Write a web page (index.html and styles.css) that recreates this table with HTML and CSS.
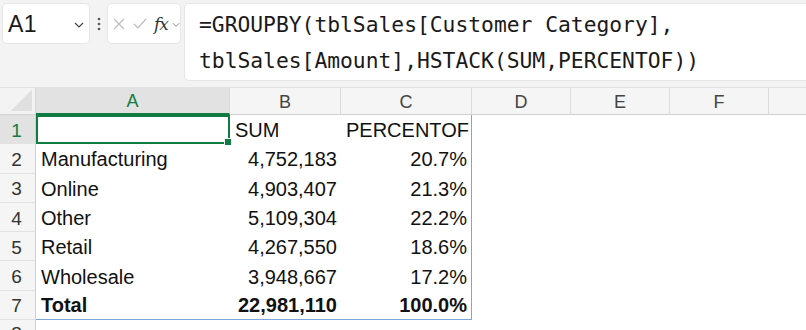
FILE: index.html
```html
<!DOCTYPE html>
<html>
<head>
<meta charset="utf-8">
<link rel="stylesheet" href="styles.css">
</head>
<body>
<div class="app">
  <div class="fbar">
    <div class="namebox">
      <span class="ref">A1</span>
      <svg class="chev" width="10" height="6" viewBox="0 0 10 6"><path d="M1 1 L5 5 L9 1" fill="none" stroke="#444" stroke-width="1.2"/></svg>
    </div>
    <div class="dots">
      <svg width="4" height="14" viewBox="0 0 4 14"><circle cx="2" cy="2" r="1.3" fill="#555"/><circle cx="2" cy="7" r="1.3" fill="#555"/><circle cx="2" cy="12" r="1.3" fill="#555"/></svg>
    </div>
    <div class="fnbox">
      <svg class="ico" width="12" height="12" viewBox="0 0 12 12"><path d="M1 1 L11 11 M11 1 L1 11" stroke="#bdbdbd" stroke-width="1.2"/></svg>
      <svg class="ico chk" width="14" height="11" viewBox="0 0 14 11"><path d="M1 6 L5 10 L13 1" fill="none" stroke="#bdbdbd" stroke-width="1.2"/></svg>
      <span class="fx">fx</span>
      <svg class="chev2" width="9" height="6" viewBox="0 0 9 6"><path d="M1 1 L4.5 4.5 L8 1" fill="none" stroke="#888" stroke-width="1.1"/></svg>
    </div>
    <div class="formula">
      <div class="fline">=GROUPBY(tblSales[Customer Category],</div>
      <div class="fline">tblSales[Amount],HSTACK(SUM,PERCENTOF))</div>
    </div>
  </div>
  <div class="sheet">
    <div class="corner"></div>
    <div class="ch sel">A</div>
    <div class="ch">B</div>
    <div class="ch">C</div>
    <div class="ch">D</div>
    <div class="ch">E</div>
    <div class="ch">F</div>
    <div class="ch last"></div>

    <div class="rh sel">1</div>
    <div class="c a1"></div>
    <div class="c">SUM</div>
    <div class="c spr pad">PERCENTOF</div>
    <div class="c"></div><div class="c"></div><div class="c"></div><div class="c"></div>

    <div class="rh">2</div>
    <div class="c">Manufacturing</div>
    <div class="c num">4,752,183</div>
    <div class="c num spr">20.7%</div>
    <div class="c"></div><div class="c"></div><div class="c"></div><div class="c"></div>

    <div class="rh">3</div>
    <div class="c">Online</div>
    <div class="c num">4,903,407</div>
    <div class="c num spr">21.3%</div>
    <div class="c"></div><div class="c"></div><div class="c"></div><div class="c"></div>

    <div class="rh">4</div>
    <div class="c">Other</div>
    <div class="c num">5,109,304</div>
    <div class="c num spr">22.2%</div>
    <div class="c"></div><div class="c"></div><div class="c"></div><div class="c"></div>

    <div class="rh">5</div>
    <div class="c">Retail</div>
    <div class="c num">4,267,550</div>
    <div class="c num spr">18.6%</div>
    <div class="c"></div><div class="c"></div><div class="c"></div><div class="c"></div>

    <div class="rh">6</div>
    <div class="c">Wholesale</div>
    <div class="c num">3,948,667</div>
    <div class="c num spr">17.2%</div>
    <div class="c"></div><div class="c"></div><div class="c"></div><div class="c"></div>

    <div class="rh">7</div>
    <div class="c b spb">Total</div>
    <div class="c b num spb">22,981,110</div>
    <div class="c b num spr spb">100.0%</div>
    <div class="c"></div><div class="c"></div><div class="c"></div><div class="c"></div>

    <div class="rh">8</div>
    <div class="c"></div><div class="c"></div><div class="c"></div>
    <div class="c"></div><div class="c"></div><div class="c"></div><div class="c"></div>
  </div>
</div>
</body>
</html>
```
FILE: styles.css
```css
* { box-sizing: border-box; }
html, body { margin: 0; padding: 0; }
body {
  width: 806px;
  height: 330px;
  overflow: hidden;
  background: #f3f3f3;
  font-family: "Liberation Sans", Arial, sans-serif;
}
.app { display: flex; flex-direction: column; height: 330px; }

.fbar {
  height: 87px;
  display: flex;
  align-items: flex-start;
  padding: 4px 0 0 3px;
  flex: none;
}
.namebox {
  width: 86px;
  height: 39px;
  background: #fff;
  border-radius: 4px;
  box-shadow: 0 0 0 1px #e6e6e6;
  display: flex;
  align-items: center;
  justify-content: space-between;
  padding: 1px 5px 0 5px;
}
.ref { font-size: 23px; color: #1a1a1a; letter-spacing: 0.3px; }
.chev { margin-top: 1px; }
.dots {
  width: 19px;
  height: 39px;
  display: flex;
  align-items: center;
  justify-content: center;
}
.fnbox {
  width: 72px;
  height: 39px;
  background: #fff;
  border-radius: 4px;
  box-shadow: 0 0 0 1px #e6e6e6;
  display: flex;
  align-items: center;
  padding: 0 0 0 5px;
}
.ico { flex: none; }
.chk { margin-left: 8px; }
.fx {
  font-family: "DejaVu Serif", "Liberation Serif", serif;
  font-style: italic;
  font-size: 17px;
  color: #333;
  margin-left: 7px;
  letter-spacing: -1px;
}
.chev2 { margin-left: 4px; margin-top: 2px; }
.formula {
  flex: 1;
  margin-left: 5px;
  margin-right: -10px;
  height: 76px;
  background: #fff;
  border-radius: 4px;
  box-shadow: 0 0 0 1px #e6e6e6;
  padding: 0 0 0 14px;
  font-family: "DejaVu Sans Mono", "Liberation Mono", monospace;
  font-size: 21.3px;
  color: #1a1a1a;
}
.fline { height: 36px; line-height: 36px; }
.fline:first-child { margin-top: 3px; }

.sheet {
  flex: 1;
  display: grid;
  grid-template-columns: 36px 194px 111px 131px 99px 99px 99px 1fr;
  grid-template-rows: 28px repeat(7, 29.3px) 1fr;
  background: #fff;
  overflow: hidden;
}
.corner {
  background: linear-gradient(135deg, #f3f3f3 0%, #f3f3f3 55%, #e0e0e0 55%, #e0e0e0 100%);
  border-right: 1px solid #d4d4d4;
  border-bottom: 1px solid #d4d4d4;
  border-top: 1px solid #e2e2e2;
  box-shadow: inset -3px -3px 0 #f3f3f3;
}
.ch {
  background: #f5f5f5;
  border-right: 1px solid #dadada;
  border-bottom: 1px solid #d0d0d0;
  border-top: 1px solid #e2e2e2;
  display: flex;
  align-items: center;
  justify-content: center;
  font-size: 18px;
  color: #444;
  padding-top: 2px;
}
.ch.sel {
  background: #e2e2e2;
  color: #107c41;
  border-bottom: 2px solid #107c41;
}
.ch.last { border-right: none; }
.rh {
  background: #f5f5f5;
  border-right: 1px solid #d0d0d0;
  border-bottom: 1px solid #e2e2e2;
  display: flex;
  align-items: center;
  justify-content: center;
  font-size: 19px;
  color: #333;
  padding: 3px 2px 0 0;
}
.rh.sel { background: #e2e2e2; color: #107c41; }
.c {
  font-size: 20px;
  color: #111;
  display: flex;
  align-items: center;
  padding: 2px 5px 0 5px;
  white-space: nowrap;
  background: #fff;
}
.pad { padding-left: 5px; }
.num { justify-content: flex-end; padding-right: 4px; }
.spr { border-right: 1px solid #7ea6dc; padding-right: 4px; }
.spb { border-bottom: 1px solid #7ea6dc; }
.b { font-weight: bold; }
.a1 {
  border: 2px solid #107c41;
  position: relative;
  overflow: visible;
}
.a1::after {
  content: "";
  position: absolute;
  right: -4px;
  bottom: -4px;
  width: 6px;
  height: 6px;
  background: #107c41;
  border: 1px solid #fff;
  z-index: 2;
}
```
